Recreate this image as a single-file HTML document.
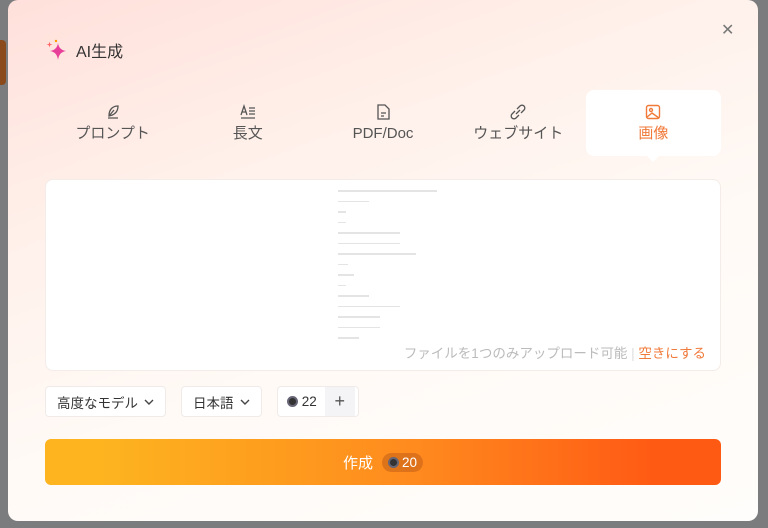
<!DOCTYPE html>
<html><head><meta charset="utf-8"><style>
*{margin:0;padding:0;box-sizing:border-box}
body{width:768px;height:528px;background:#7b7c7e;position:relative;overflow:hidden;font-family:"Liberation Sans","Noto Sans CJK JP",sans-serif}
.tab{position:absolute;left:0;top:40px;width:6px;height:45px;background:#8a4a1c;border-radius:0 4px 4px 0}
.modal{position:absolute;left:8px;top:0;width:750px;height:521px;border-radius:10px;background:linear-gradient(160deg,#ffe0db 0%,#fff0ea 30%,#fffaf6 60%,#fffdfb 100%)}
.title{position:absolute;left:38px;top:38px;font-size:16px;color:#333;display:flex;align-items:center;gap:8px}
.close{position:absolute;left:713px;top:20px;font-size:16px;color:#777}
.tabs{position:absolute;left:37px;top:90px;width:676px;height:66px;display:flex}
.t{flex:1;text-align:center;color:#555;font-size:15px;line-height:22px;padding-top:13px;position:relative;white-space:nowrap}
.t svg{display:block;margin:0 auto 2px}
.t.a{background:#fff;border-radius:8px;color:#f07a3a}
.t.a:after{content:"";position:absolute;left:50%;bottom:-6px;margin-left:-6px;border:6px solid transparent;border-top-color:#fff;border-bottom:0}
.box{position:absolute;left:37px;top:179px;width:676px;height:192px;background:#fff;border-radius:8px;border:1px solid #f3ece8}
.doc{position:absolute;left:292px;top:10px;width:104px}
.doc i{display:block;height:1.5px;background:#e4e4e4;margin-bottom:9px}
.hint{position:absolute;right:14px;top:162px;font-size:13.5px;color:#bbb;white-space:nowrap}
.hint b{font-weight:normal;color:#f07a3a}
.sel{position:absolute;top:386px;height:31px;background:#fff;border:1px solid #f0ebe8;border-radius:4px;font-size:13.5px;color:#333;display:flex;align-items:center;padding:0 11px;white-space:nowrap}
.sel svg{margin-left:6px}
.btn{position:absolute;left:37px;top:439px;width:676px;height:46px;border-radius:6px;background:linear-gradient(90deg,#fdb41f 8%,#ff8a1e 55%,#ff5a14 90%);color:#fff;font-size:15px;display:flex;align-items:center;justify-content:center;gap:9px}
.pill{background:rgba(160,70,20,.35);border-radius:11px;padding:2px 6px;display:flex;align-items:center;gap:3px;font-size:13.5px}
.coin{width:11px;height:11px;border-radius:50%;background:#333;border:2px solid #667;display:inline-block}
</style></head><body>
<div class="tab"></div>
<div class="modal">
<div class="title"><svg width="22" height="22" viewBox="0 0 22 22"><path d="M12 4 Q13 11 20 12 Q13 13 12 21 Q11 13 4 12 Q11 11 12 4Z" fill="#e8409a"/><path d="M5 4 L6 7 L9 8 L6 9 L5 12 L4 9 L1 8 L4 7Z" fill="#f66" transform="scale(.7)"/><circle cx="10" cy="2" r="1.2" fill="#f90"/></svg>AI生成</div>
<div class="close">✕</div>
<div class="tabs">
<div class="t"><svg width="18" height="18" viewBox="0 0 18 18" fill="none" stroke="#555" stroke-width="1.3"><path d="M4 15 L14 15 M5 13 C5 6 9 3 14 3 C14 9 10 12 5 13Z M5 13 L10 7"/></svg>プロンプト</div>
<div class="t"><svg width="18" height="18" viewBox="0 0 18 18" fill="none" stroke="#555" stroke-width="1.3"><path d="M2 12 L5 3 L8 12 M3 9 H7 M10 5 H16 M10 8 H16 M10 11 H16 M2 15 H16"/></svg>長文</div>
<div class="t"><svg width="18" height="18" viewBox="0 0 18 18" fill="none" stroke="#555" stroke-width="1.3"><path d="M4 2 H11 L15 6 V16 H4Z M7 10 H12 M7 13 H10"/></svg>PDF/Doc</div>
<div class="t"><svg width="18" height="18" viewBox="0 0 18 18" fill="none" stroke="#555" stroke-width="1.3"><path d="M8 6 L11 3 A2.5 2.5 0 0 1 15 7 L12 10 M10 12 L7 15 A2.5 2.5 0 0 1 3 11 L6 8 M7 11 L11 7"/></svg>ウェブサイト</div>
<div class="t a"><svg width="18" height="18" viewBox="0 0 18 18" fill="none" stroke="#f07a3a" stroke-width="1.4"><rect x="2.5" y="2.5" width="13" height="13" rx="2"/><circle cx="7" cy="7" r="1.5"/><path d="M3 14 L8 10 L15 15"/></svg>画像</div>
</div>
<div class="box">
<div class="doc"><i style="width:95%"></i><i style="width:30%"></i><i style="width:8%"></i><i style="width:8%"></i><i style="width:60%"></i><i style="width:60%"></i><i style="width:75%"></i><i style="width:10%"></i><i style="width:15%"></i><i style="width:8%"></i><i style="width:30%"></i><i style="width:60%"></i><i style="width:40%"></i><i style="width:40%"></i><i style="width:20%"></i></div>
<div class="hint">ファイルを1つのみアップロード可能 <span style="color:#ddd">|</span> <b>空きにする</b></div>
</div>
<div class="sel" style="left:37px;width:121px">高度なモデル<svg width="10" height="6" viewBox="0 0 10 6"><path d="M1 1 L5 5 L9 1" fill="none" stroke="#444" stroke-width="1.4"/></svg></div>
<div class="sel" style="left:173px;width:81px">日本語<svg width="10" height="6" viewBox="0 0 10 6"><path d="M1 1 L5 5 L9 1" fill="none" stroke="#444" stroke-width="1.4"/></svg></div>
<div class="sel" style="left:269px;width:82px;padding:0 0 0 9px"><span class="coin"></span>&nbsp;22<span style="margin-left:8px;background:#f4f4f6;width:30px;height:29px;display:flex;align-items:center;justify-content:center;font-size:18px;color:#555">+</span></div>
<div class="btn">作成<span class="pill"><span class="coin"></span>20</span></div>
</div>
</body></html>
